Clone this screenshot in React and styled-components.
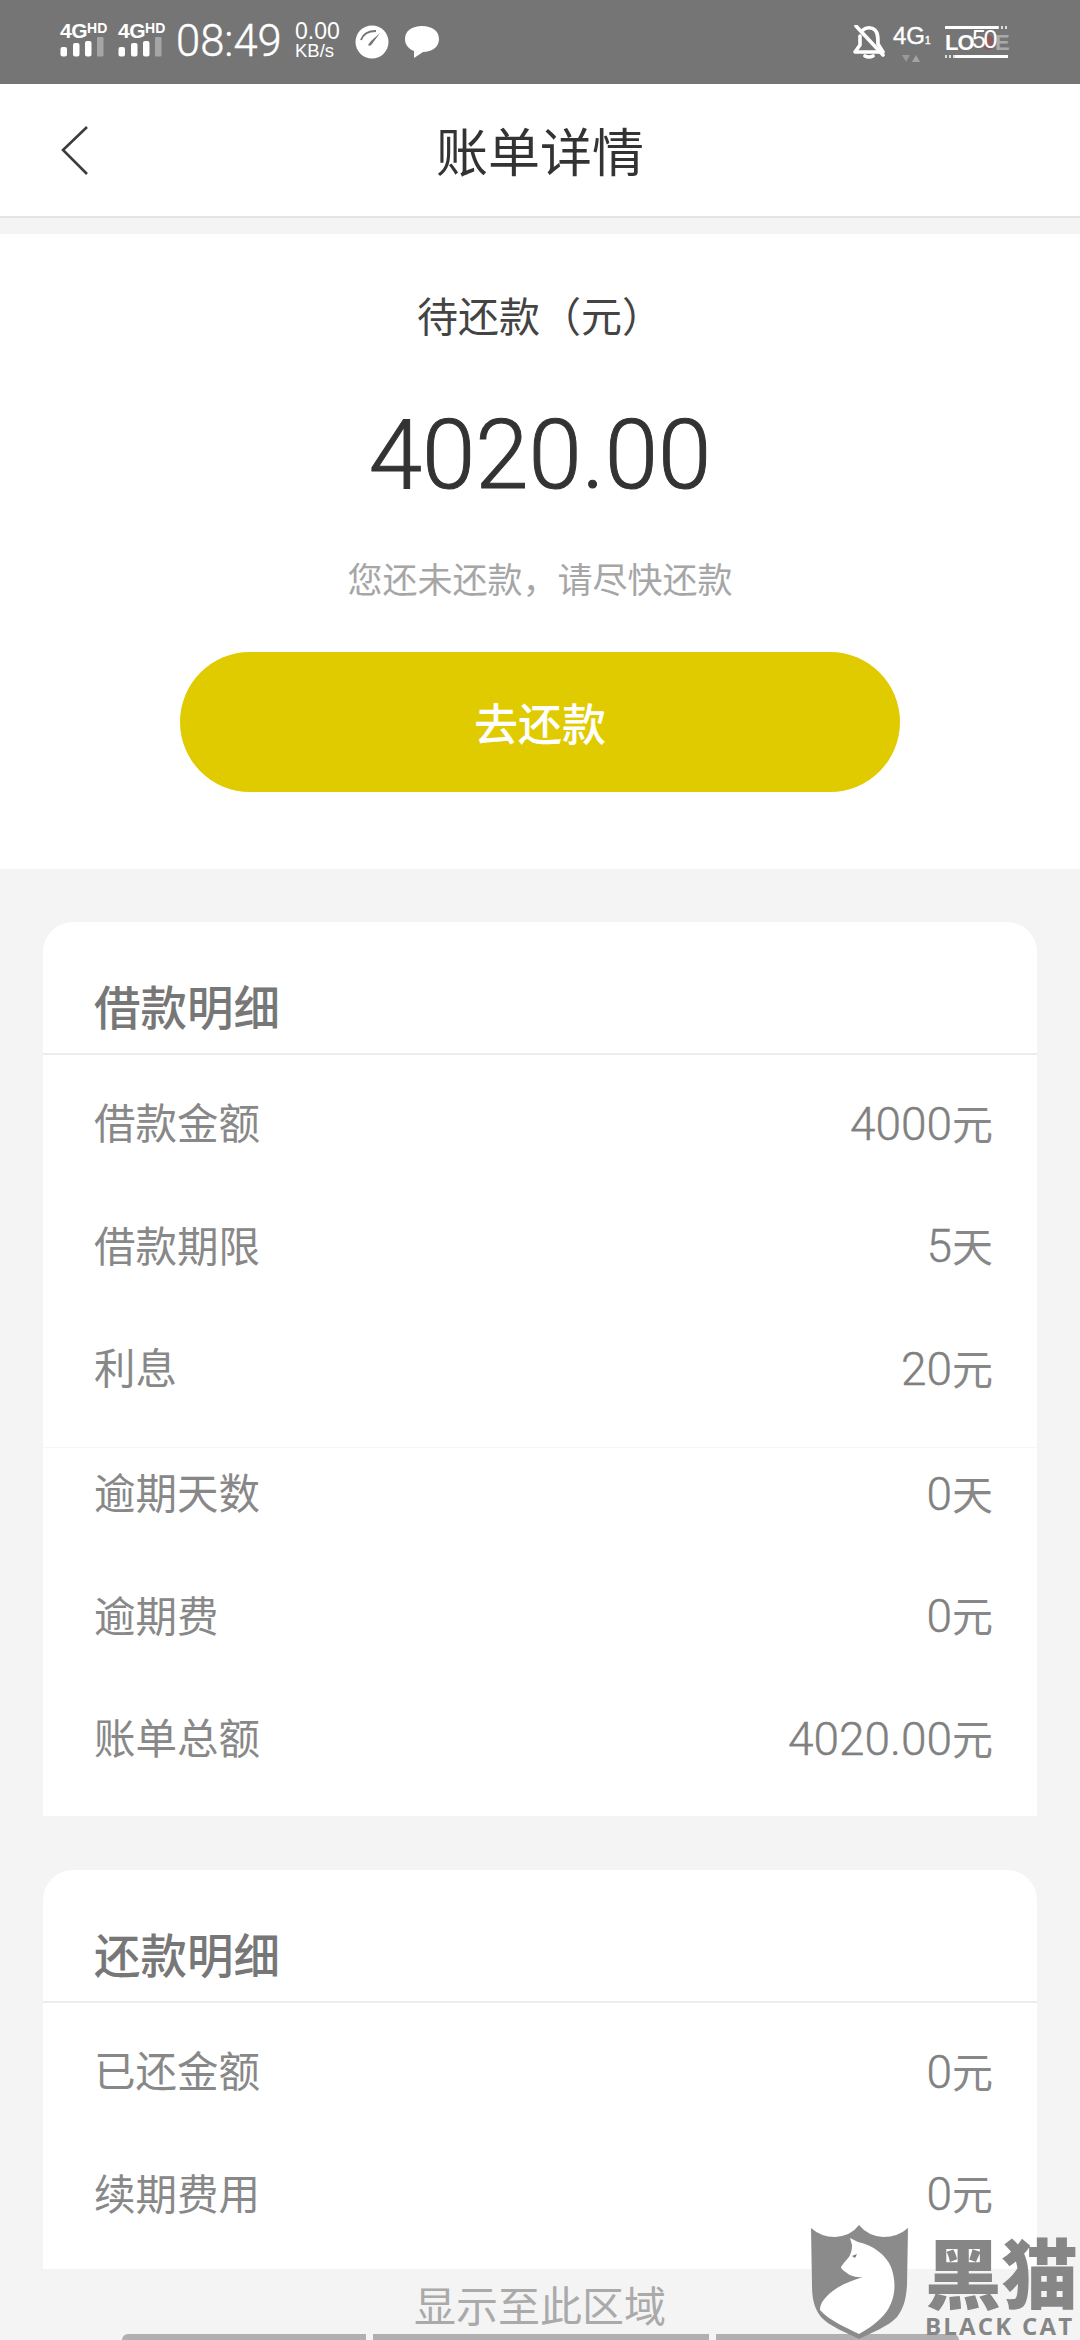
import React from "react";
import styled, {createGlobalStyle} from "styled-components";

const cjk = `"Noto Sans CJK SC", "Noto Sans", sans-serif`;
const latin = `Roboto, "Noto Sans CJK SC", sans-serif`;

const GlobalStyle = createGlobalStyle`
  html, body {
    margin: 0;
    padding: 0;
    background: #f4f4f4;
  }

  * {
    box-sizing: border-box;
  }
`;

const Page = styled.div`
  position: relative;
  width: 1080px;
  height: 2340px;
  overflow: hidden;
  background: #f4f4f4;
  font-family: ${cjk};
`;

const StatusBar = styled.div`
  height: 84px;
  background: #757575;
  display: flex;
  align-items: center;
  padding: 0 72px 0 60px;
  color: #fff;
  font-family: "Liberation Sans", sans-serif;
`;

const NetGroup = styled.div`
  width: 58px;
  display: flex;
  flex-direction: column;
  align-self: flex-start;
  margin-top: 22px;
`;

const NetLabel = styled.div`
  display: flex;
  align-items: flex-start;
  height: 15px;
  font-size: 21px;
  line-height: 17px;
  font-weight: 700;
  letter-spacing: -0.5px;

  sup {
    font-size: 14px;
    line-height: 12px;
    margin: 0;
    letter-spacing: 0;
    vertical-align: top;
  }
`;

const Clock = styled.div`
  font-family: ${latin};
  font-size: 43.5px;
  font-weight: 300;
  -webkit-text-stroke: 0.4px #fff;
  line-height: 48px;
  width: 119px;
`;

const Speed = styled.div`
  width: 60px;
  font-size: 23px;
  line-height: 20px;
  margin-top: -2px;

  small {
    display: block;
    font-size: 18.5px;
  }
`;

const TrayIcon = styled.svg`
  display: block;
  flex: none;
  margin-right: ${(p) => p.$gap || 0}px;
`;

const RightTray = styled.div`
  margin-left: auto;
  display: flex;
  align-items: center;
`;

const Carrier = styled.div`
  width: 52px;
  margin-left: 8px;
  display: flex;
  flex-direction: column;
  margin-top: 4px;
`;

const CarrierName = styled.div`
  font-size: 24px;
  line-height: 22px;
  font-weight: 400;
  -webkit-text-stroke: 0.4px #fff;

  small {
    font-size: 10px;
  }
`;

const Battery = styled.div`
  width: 63px;
  display: flex;
  flex-direction: column;
  gap: 3px;
`;

const BatteryEdge = styled.div`
  height: 3px;
  background: ${(p) => p.$top
          ? "linear-gradient(90deg, #fff 53px, transparent 53px), repeating-linear-gradient(90deg, #ddd 0 2px, transparent 2px 4px)"
          : "linear-gradient(90deg, transparent 10px, #fff 10px), repeating-linear-gradient(90deg, #ddd 0 2px, transparent 2px 4px)"};
`;

const BatteryBody = styled.div`
  position: relative;
  height: 20px;
  font-size: 22px;
  font-weight: 700;
  line-height: 21px;
  letter-spacing: -1px;
  white-space: nowrap;
`;

const BatteryMode = styled.span`
  position: absolute;
  left: 50px;
  top: 0;
  color: #a9a9a9;
`;

const BatteryDot = styled.span`
  position: absolute;
  left: 37px;
  top: 3px;
  width: 12px;
  height: 15px;
  border-radius: 50%;
  background: #8d5a5e;
`;

const BatteryLevel = styled.span`
  position: absolute;
  left: 27px;
  top: -3px;
  font-size: 25px;
  font-weight: 400;
  letter-spacing: -2.4px;
`;

const NavBar = styled.div`
  height: 134px;
  background: #fff;
  border-bottom: 2px solid #e4e4e4;
  display: grid;
  grid-template-columns: 1fr auto 1fr;
  align-items: center;
  padding: 2px 61px 0;
`;

const NavTitle = styled.div`
  font-size: 52px;
  font-weight: 400;
  line-height: 60px;
  color: #333;
  margin-top: -2px;
`;

const Hero = styled.div`
  margin-top: 16px;
  height: 635px;
  background: #fff;
  display: flex;
  flex-direction: column;
  align-items: center;
  padding-top: 54px;
`;

const HeroLabel = styled.div`
  font-size: 41px;
  line-height: 52px;
  color: #444;
  text-spacing-trim: space-all;
`;

const Amount = styled.div`
  margin-top: 60px;
  font-family: ${latin};
  font-size: 96px;
  font-weight: 300;
  -webkit-text-stroke: 1px #333;
  line-height: 110px;
  color: #333;
`;

const HeroHint = styled.div`
  margin-top: 44px;
  font-size: 35px;
  line-height: 48px;
  color: #a6a6a6;
`;

const PayButton = styled.button`
  margin-top: 50px;
  width: 720px;
  height: 140px;
  border: 0;
  border-radius: 70px;
  background: #e0ca00;
  color: #fff;
  font-family: ${cjk};
  font-size: 44px;
  font-weight: 500;
`;

const Card = styled.section`
  margin: ${(p) => p.$top}px 43px 0;
  background: #fff;
  border-radius: 30px 30px 0 0;
`;

const CardTitle = styled.h2`
  margin: 0;
  height: 133px;
  padding: 52px 0 0 51px;
  border-bottom: 2px solid #ececec;
  font-size: 46.5px;
  line-height: 62px;
  font-weight: 500;
  color: #777;
`;

const RowGroup = styled.div`
  display: flex;
  flex-direction: column;
  gap: 62.5px;
  padding: ${(p) => p.$top}px 44px ${(p) => p.$bottom}px 51px;
  border-bottom: ${(p) => (p.$divided ? "1px solid #f6f6f6" : "0")};
`;

const Row = styled.div`
  height: 60px;
  display: flex;
  justify-content: space-between;
  align-items: center;
  font-size: 41.5px;
  line-height: 60px;
  color: #888;
`;

const RowValue = styled.span`
  margin-top: 3px;
  font-family: ${latin};
  font-size: 46px;
  font-weight: 300;
  -webkit-text-stroke: 0.4px #808080;
  color: #808080;

  i {
    font-family: ${cjk};
    font-style: normal;
    font-size: 41px;
    font-weight: 400;
    -webkit-text-stroke: 0;
    color: #888;
  }
`;

const Footer = styled.div`
  height: 72px;
  display: flex;
  flex-direction: column;
  align-items: center;
`;

const FooterText = styled.div`
  height: 65px;
  font-size: 42px;
  line-height: 70px;
  color: #aaa;
`;

const TabBars = styled.div`
  display: flex;
  gap: 7px;
  width: 837px;
`;

const TabBar = styled.div`
  flex: ${(p) => p.$size};
  height: 7px;
  background: #b0b0b0;
  border-radius: ${(p) => p.$radius || "0"};
`;

const Watermark = styled.div`
  position: absolute;
  left: 811px;
  top: 2225px;
  width: 269px;
  display: flex;
  gap: 17px;
  color: #868686;
`;

const WatermarkText = styled.div`
  width: 155px;
  display: flex;
  flex-direction: column;
  padding-top: 7px;
`;

const WatermarkName = styled.div`
  font-size: 76.5px;
  font-weight: 900;
  line-height: 76px;
  letter-spacing: 0;
  white-space: nowrap;
`;

const WatermarkLatin = styled.div`
  margin-top: 7px;
  font-family: "Open Sans", sans-serif;
  font-size: 24px;
  font-weight: 700;
  line-height: 22px;
  letter-spacing: 2.2px;
  white-space: nowrap;
`;

const Signal = () => (
    <svg width="46" height="20" viewBox="0 0 46 20">
        <rect x="0.5" y="10" width="6.5" height="9.5" rx="2" fill="#fff"/>
        <rect x="13" y="6" width="6.5" height="13.5" rx="2" fill="#fff"/>
        <rect x="25" y="4" width="6.5" height="15.5" rx="2" fill="#fff"/>
        <rect x="37" y="0" width="6.5" height="19.5" rx="1" fill="#a5a5a5"/>
    </svg>
);

const Net = () => <NetGroup>
    <NetLabel>4G<sup>HD</sup></NetLabel>
    <Signal/>
</NetGroup>;

const Gauge = () => (
    <TrayIcon width="34" height="34" viewBox="0 0 34 34" $gap={15}>
        <circle cx="17" cy="17" r="16.5" fill="#fff"/>
        <path d="M6 15 C8 9 13 6 21 6" fill="none" stroke="#757575" strokeWidth="2"/>
        <path d="M25 8 L16 16 L13 20 Q15 22 17 19 Z" fill="#757575"/>
    </TrayIcon>
);

const Bubble = () => (
    <TrayIcon width="36" height="34" viewBox="0 0 36 34">
        <path d="M18 1 C28 1 35 6 35 14 C35 22 28 27 19 27 L10 33 L10 26 C5 24 1 20 1 14 C1 6 8 1 18 1 Z" fill="#fff"/>
    </TrayIcon>
);

const BellOff = () => (
    <TrayIcon width="32" height="34" viewBox="0 0 32 34">
        <g fill="none" stroke="#fff" strokeWidth="3.6" strokeLinecap="round" strokeLinejoin="round">
            <path d="M10 5 C13 2 19 2 22 5 C25 8 25 12 25 19 L30 27 L2 27 L7 20 L7 11"/>
            <path d="M12 31 Q16 33 20 31"/>
            <path d="M3 1 L30 30"/>
        </g>
    </TrayIcon>
);

const CarrierArrows = () => (
    <svg width="20" height="9" viewBox="0 0 20 9" style={{marginLeft: 8, marginTop: 2}}>
        <path d="M1 1 L9 1 L5 8 Z" fill="#999"/>
        <path d="M11 8 L19 8 L15 1 Z" fill="#a3a3a3"/>
    </svg>
);

const BackArrow = () => (
    <svg width="28" height="52" viewBox="0 0 28 52" style={{display: "block"}}>
        <path d="M26 2 L2 25 L26 49" fill="none" stroke="#3c3c3c" strokeWidth="2.6"/>
    </svg>
);

const Shield = () => (
    <svg width="97" height="114" viewBox="0 0 97 114" style={{display: "block", flex: "none"}}>
        <path d="M0 3 Q10 12 24 12 Q40 11 48 0 Q57 11 72 12 Q87 12 97 3 L96 60 C95 76 92 84 86 92 C78 101 60 108 48 114 C36 108 18 101 10 92 C4 84 1 76 1 60 Z" fill="#8b8b8b"/>
        <path d="M39 13 L47 17 C62 20 75 30 80 42 C86 58 84 74 76 86 C68 97 57 104 48 109 C34 102 19 96 9 85 C9 78 14 71 26 63 C34 58 43 55 52 52 C44 53 38 50 36 48 C33 46 30 44 30 42 C33 37 38 33 39 30 C41 26 41 22 41 20 Z" fill="#fff"/>
        <path d="M41 31 L46 29 L44 33 Z" fill="#777"/>
    </svg>
);

const loanRowsTop = [
    ["借款金额", "4000"],
    ["借款期限", "5", "天"],
    ["利息", "20"],
];

const loanRowsBottom = [
    ["逾期天数", "0", "天"],
    ["逾期费", "0"],
    ["账单总额", "4020.00"],
];

const repayRows = [
    ["已还金额", "0"],
    ["续期费用", "0"],
];

const Rows = ({rows}) => rows.map(([label, value, unit = "元"]) =>
    <Row key={label}>
        <span>{label}</span>
        <RowValue>{value}<i>{unit}</i></RowValue>
    </Row>
);

export default function App() {
    return <Page>
        <GlobalStyle/>
        <StatusBar>
            <Net/>
            <Net/>
            <Clock>08:49</Clock>
            <Speed>0.00<small>KB/s</small></Speed>
            <Gauge/>
            <Bubble/>
            <RightTray>
                <BellOff/>
                <Carrier>
                    <CarrierName>4G<small>1</small></CarrierName>
                    <CarrierArrows/>
                </Carrier>
                <Battery>
                    <BatteryEdge $top/>
                    <BatteryBody>
                        LO
                        <BatteryDot/>
                        <BatteryMode>E</BatteryMode>
                        <BatteryLevel>50</BatteryLevel>
                    </BatteryBody>
                    <BatteryEdge/>
                </Battery>
            </RightTray>
        </StatusBar>
        <NavBar>
            <BackArrow/>
            <NavTitle>账单详情</NavTitle>
        </NavBar>
        <Hero>
            <HeroLabel>待还款（元）</HeroLabel>
            <Amount>4020.00</Amount>
            <HeroHint>您还未还款，请尽快还款</HeroHint>
            <PayButton>去还款</PayButton>
        </Hero>
        <Card $top={53}>
            <CardTitle>借款明细</CardTitle>
            <RowGroup $top={36} $bottom={51} $divided>
                <Rows rows={loanRowsTop}/>
            </RowGroup>
            <RowGroup $top={13} $bottom={50}>
                <Rows rows={loanRowsBottom}/>
            </RowGroup>
        </Card>
        <Card $top={54}>
            <CardTitle>还款明细</CardTitle>
            <RowGroup $top={36} $bottom={47}>
                <Rows rows={repayRows}/>
            </RowGroup>
        </Card>
        <Footer>
            <FooterText>显示至此区域</FooterText>
            <TabBars>
                <TabBar $size={244} $radius="6px 0 0 0"/>
                <TabBar $size={336}/>
                <TabBar $size={243} $radius="0 6px 0 0"/>
            </TabBars>
        </Footer>
        <Watermark>
            <Shield/>
            <WatermarkText>
                <WatermarkName>黑猫</WatermarkName>
                <WatermarkLatin>BLACK CAT</WatermarkLatin>
            </WatermarkText>
        </Watermark>
    </Page>;
}
